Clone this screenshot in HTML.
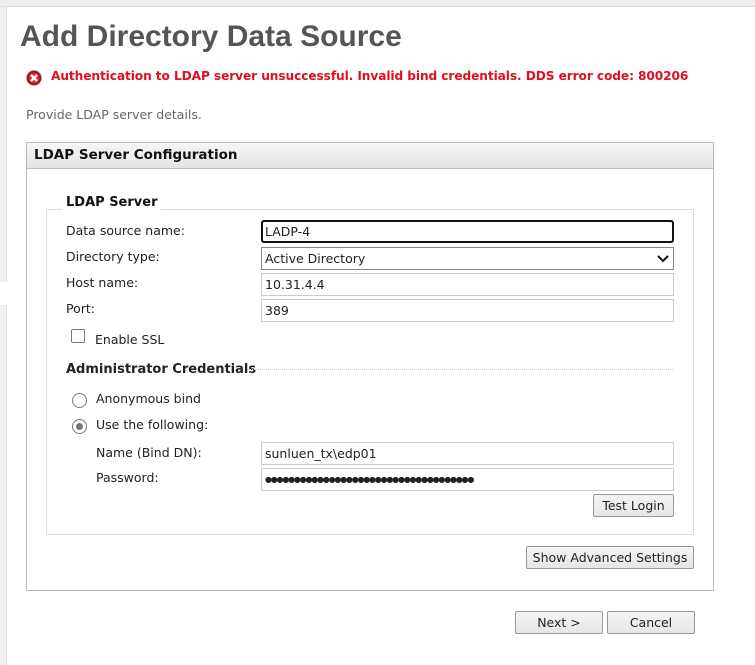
<!DOCTYPE html>
<html><head><style>
body{margin:0;width:755px;height:660px;background:#fff;position:relative;overflow:hidden;font-family:"DejaVu Sans","Liberation Sans",sans-serif;font-size:12px;color:#222}
.a{position:absolute;white-space:nowrap}
.in{position:absolute;left:261px;border:1px solid #ccc;background:#fff;font-size:12.5px;line-height:21px;padding-left:3px;box-sizing:border-box;width:413px;height:23px}
.btn{position:absolute;height:23px;border:1px solid #999;border-radius:2px;background:linear-gradient(#f4f4f4,#e6e6e6);box-sizing:border-box;text-align:center;line-height:21px;font-size:12.5px;color:#222}
.lbl{position:absolute;white-space:nowrap;font-size:12.5px}
</style></head><body>
<div class="a" style="left:0;top:0;width:755px;height:6px;background:#eee;border-bottom:1px solid #ddd"></div>
<div class="a" style="left:0;top:7px;width:6px;height:275px;background:#f0f0f0;border-right:1px solid #ddd"></div>
<div class="a" style="left:0;top:305px;width:6px;height:360px;background:#f0f0f0;border-right:1px solid #ddd"></div>
<div class="a" style="left:20px;top:20px;font-family:'Liberation Sans',sans-serif;font-weight:bold;font-size:30px;color:#555">Add Directory Data Source</div>
<svg class="a" style="left:26px;top:70px" width="16" height="16" viewBox="0 0 16 16"><circle cx="8" cy="8" r="7.5" fill="#a01020"/><circle cx="8" cy="8" r="5.5" fill="#d42a35"/><path d="M5 5L11 11M11 5L5 11" stroke="#fff" stroke-width="2.4"/></svg>
<div class="a" style="left:51px;top:69px;font-family:'DejaVu Sans',sans-serif;font-weight:bold;font-size:12.2px;letter-spacing:-0.1px;color:#e0101e">Authentication to LDAP server unsuccessful. Invalid bind credentials. DDS error code: 800206</div>
<div class="a" style="left:26px;top:107px;color:#666;font-size:12.5px">Provide LDAP server details.</div>
<div class="a" style="left:26px;top:142px;width:686px;height:447px;border:1px solid #bbb;background:#fff"></div>
<div class="a" style="left:27px;top:143px;width:686px;height:25px;background:linear-gradient(#f6f6f6,#e4e4e4);border-bottom:1px solid #bbb"></div>
<div class="a" style="left:34px;top:147px;font-weight:bold;font-size:13.5px;color:#111">LDAP Server Configuration</div>
<div class="a" style="left:46px;top:209px;width:646px;height:324px;border:1px solid #ddd"></div>
<div class="a" style="left:62px;top:195px;background:#fff;padding:0 4px;font-weight:bold;font-size:13px;color:#111">LDAP Server</div>
<div class="lbl" style="left:66px;top:223px">Data source name:</div>
<div class="in" style="top:220px;border:2px solid #111;border-radius:3px;line-height:19px;padding-left:2px">LADP-4</div>
<div class="lbl" style="left:66px;top:249px">Directory type:</div>
<div class="in" style="top:247px;border-color:#888">Active Directory
<svg style="position:absolute;right:4px;top:7px" width="12" height="8"><path d="M1 1L6 6L11 1" stroke="#111" stroke-width="2" fill="none"/></svg></div>
<div class="lbl" style="left:66px;top:275px">Host name:</div>
<div class="in" style="top:273px">10.31.4.4</div>
<div class="lbl" style="left:66px;top:301px">Port:</div>
<div class="in" style="top:299px">389</div>
<div class="a" style="left:71px;top:329px;width:12px;height:12px;border:1px solid #777;border-radius:2px"></div>
<div class="lbl" style="left:95px;top:332px">Enable SSL</div>
<div class="a" style="left:66px;top:362px;font-weight:bold;font-size:13px;color:#222">Administrator Credentials</div>
<div class="a" style="left:248px;top:369px;width:425px;border-top:1px dotted #ccc"></div>
<div class="a" style="left:72px;top:393px;width:13px;height:13px;border:1px solid #777;border-radius:50%"></div>
<div class="lbl" style="left:96px;top:391px">Anonymous bind</div>
<div class="a" style="left:72px;top:419px;width:13px;height:13px;border:1px solid #777;border-radius:50%"></div>
<div class="a" style="left:76px;top:423px;width:7px;height:7px;background:#777;border-radius:50%"></div>
<div class="lbl" style="left:96px;top:417px">Use the following:</div>
<div class="lbl" style="left:96px;top:445px">Name (Bind DN):</div>
<div class="in" style="top:442px">sunluen_tx\edp01</div>
<div class="lbl" style="left:96px;top:470px">Password:</div>
<div class="in" style="top:468px;font-size:8px;letter-spacing:-1.2px">●●●●●●●●●●●●●●●●●●●●●●●●●●●●●●●●●●●●</div>
<div class="btn" style="left:593px;top:494px;width:81px">Test Login</div>
<div class="btn" style="left:526px;top:546px;width:168px">Show Advanced Settings</div>
<div class="btn" style="left:515px;top:611px;width:88px">Next &gt;</div>
<div class="btn" style="left:607px;top:611px;width:88px">Cancel</div>
</body></html>
